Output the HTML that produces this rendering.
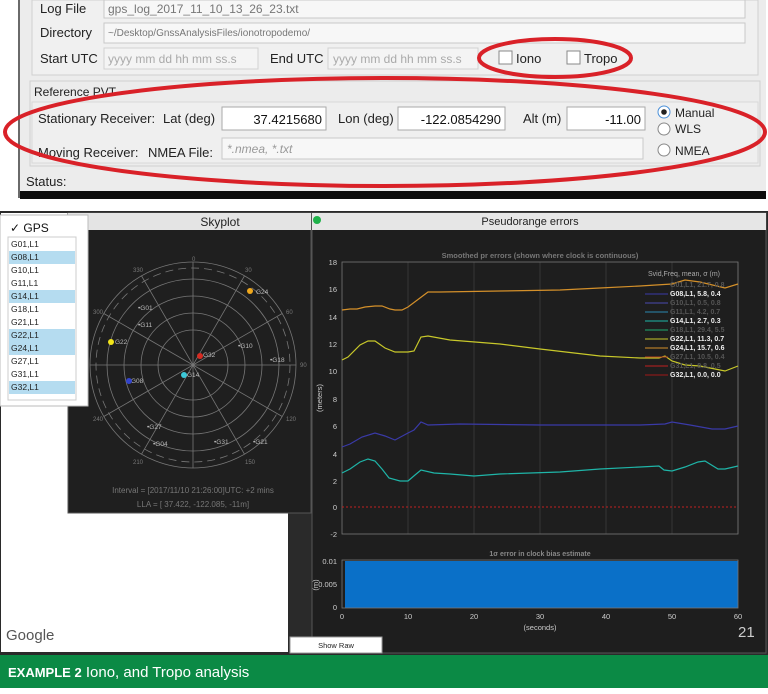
<!DOCTYPE html>
<html><head><meta charset="utf-8"><style>
html,body{margin:0;padding:0;background:#fff;width:768px;height:694px;overflow:hidden}
svg{display:block;font-family:"Liberation Sans",sans-serif}
</style></head><body>
<svg width="768" height="694" viewBox="0 0 768 694" xmlns="http://www.w3.org/2000/svg">
<!-- TOP PANEL -->
<rect x="0" y="0" width="768" height="210" fill="#fff"/>
<rect x="18" y="0" width="748" height="198" fill="#ececec"/>
<rect x="18" y="0" width="2" height="198" fill="#6a6a6a"/>
<rect x="20" y="191" width="746" height="8" fill="#0c0c0c"/>
<rect x="32" y="0" width="726" height="75" fill="#f0f0f0" stroke="#d0d0d0"/>
<g font-size="13" fill="#222">
<text x="40" y="13">Log File</text>
<text x="40" y="37">Directory</text>
<text x="40" y="63">Start UTC</text>
<text x="270" y="63">End UTC</text>
</g>
<rect x="104" y="0" width="641" height="18" fill="#f7f7f7" stroke="#c8c8c8"/>
<text x="108" y="13" font-size="12" fill="#777">gps_log_2017_11_10_13_26_23.txt</text>
<rect x="104" y="23" width="641" height="20" fill="#f7f7f7" stroke="#c8c8c8"/>
<text x="108" y="36" font-size="10" fill="#777">~/Desktop/GnssAnalysisFiles/ionotropodemo/</text>
<rect x="104" y="48" width="154" height="21" fill="#f4f4f4" stroke="#d2d2d2"/>
<text x="108" y="63" font-size="12" fill="#aaa">yyyy mm dd hh mm ss.s</text>
<rect x="328" y="48" width="150" height="21" fill="#f4f4f4" stroke="#d2d2d2"/>
<text x="333" y="63" font-size="12" fill="#aaa">yyyy mm dd hh mm ss.s</text>
<rect x="499" y="51" width="13" height="13" fill="#fff" stroke="#888"/>
<text x="516" y="63" font-size="13" fill="#222">Iono</text>
<rect x="567" y="51" width="13" height="13" fill="#fff" stroke="#888"/>
<text x="584" y="63" font-size="13" fill="#222">Tropo</text>

<rect x="30" y="81" width="730" height="85" fill="#ececec" stroke="#d0d0d0"/>
<text x="34" y="96" font-size="12" fill="#222">Reference PVT</text>
<rect x="32" y="102" width="726" height="61" fill="#efefef" stroke="#d8d8d8"/>
<g font-size="13" fill="#222">
<text x="38" y="123">Stationary Receiver:</text>
<text x="163" y="123">Lat (deg)</text>
<text x="338" y="123">Lon (deg)</text>
<text x="523" y="123">Alt (m)</text>
<text x="38" y="157">Moving Receiver:</text>
<text x="148" y="157">NMEA File:</text>
<text x="675" y="117" font-size="12">Manual</text>
<text x="675" y="133" font-size="12">WLS</text>
<text x="675" y="155" font-size="12">NMEA</text>
</g>
<rect x="222" y="107" width="104" height="23" fill="#fff" stroke="#aaa"/>
<text x="322" y="124" font-size="13" text-anchor="end" fill="#111">37.4215680</text>
<rect x="398" y="107" width="107" height="23" fill="#fff" stroke="#aaa"/>
<text x="501" y="124" font-size="13" text-anchor="end" fill="#111">-122.0854290</text>
<rect x="567" y="107" width="78" height="23" fill="#fff" stroke="#aaa"/>
<text x="641" y="124" font-size="13" text-anchor="end" fill="#111">-11.00</text>
<rect x="222" y="138" width="421" height="21" fill="#f7f7f7" stroke="#c8c8c8"/>
<text x="227" y="153" font-size="12" font-style="italic" fill="#999">*.nmea, *.txt</text>
<circle cx="664" cy="112" r="6" fill="#fff" stroke="#4a90d9"/><circle cx="664" cy="112" r="2.8" fill="#222"/>
<circle cx="664" cy="129" r="6" fill="#fff" stroke="#888"/>
<circle cx="664" cy="150" r="6" fill="#fff" stroke="#888"/>
<text x="26" y="186" font-size="13" fill="#222">Status:</text>
<!-- red ellipses -->
<ellipse cx="555" cy="58" rx="76" ry="19" fill="none" stroke="#d92128" stroke-width="4"/>
<ellipse cx="385" cy="132" rx="380" ry="54" fill="none" stroke="#d92128" stroke-width="4"/>

<!-- BOTTOM -->
<rect x="0" y="211" width="768" height="444" fill="#2a2a2a"/>
<rect x="1" y="213" width="287" height="439" fill="#fff"/>
<text x="6" y="640" font-size="15" fill="#555">Google</text>
<!-- skyplot window -->
<rect x="68" y="213" width="243" height="300" fill="#1f1f1f" stroke="#555"/>
<rect x="68" y="213" width="243" height="17" fill="#e4e4e4"/>
<text x="220" y="226" font-size="12" text-anchor="middle" fill="#222">Skyplot</text>
<g fill="none" stroke="#777" stroke-width="0.8">
<circle cx="193" cy="365" r="103"/><circle cx="193" cy="365" r="86"/><circle cx="193" cy="365" r="69"/><circle cx="193" cy="365" r="52"/><circle cx="193" cy="365" r="35"/>
<circle cx="193" cy="365" r="97" stroke-dasharray="8 5"/>
<line x1="193" y1="262" x2="193" y2="468"/><line x1="90" y1="365" x2="296" y2="365"/>
<line x1="141.5" y1="275.8" x2="244.5" y2="454.2"/><line x1="244.5" y1="275.8" x2="141.5" y2="454.2"/>
<line x1="103.8" y1="313.5" x2="282.2" y2="416.5"/><line x1="282.2" y1="313.5" x2="103.8" y2="416.5"/>
</g>
<g font-size="6" fill="#777">
<text x="192" y="261">0</text><text x="245" y="272">30</text><text x="286" y="314">60</text><text x="300" y="367">90</text>
<text x="286" y="421">120</text><text x="245" y="464">150</text><text x="133" y="464">210</text><text x="93" y="421">240</text><text x="93" y="314">300</text><text x="133" y="272">330</text>
</g>
<g font-size="6.5" fill="#bbb">
<text x="138" y="310">•G01</text><text x="138" y="327">•G11</text><text x="238" y="348">•G10</text><text x="270" y="362">•G18</text>
<text x="147" y="429">•G27</text><text x="153" y="446">•G04</text><text x="214" y="444">•G31</text><text x="253" y="444">•G21</text>
<text x="256" y="294">G24</text><text x="115" y="344">G22</text><text x="203" y="357">G32</text><text x="131" y="383">G08</text><text x="187" y="377">G14</text>
</g>
<circle cx="250" cy="291" r="3" fill="#f0a81c"/><circle cx="111" cy="342" r="3" fill="#f2e51a"/>
<circle cx="200" cy="356" r="3" fill="#d62b22"/><circle cx="129" cy="381" r="3" fill="#3344cc"/><circle cx="184" cy="375" r="3" fill="#3cc8d8"/>
<text x="193" y="493" font-size="8" text-anchor="middle" fill="#777">Interval = [2017/11/10  21:26:00]UTC: +2 mins</text>
<text x="193" y="507" font-size="8" text-anchor="middle" fill="#777">LLA = [ 37.422, -122.085, -11m]</text>
<!-- GPS list -->
<rect x="0" y="215" width="88" height="191" fill="#fff" stroke="#bbb"/>
<text x="10" y="232" font-size="12" fill="#111">✓ GPS</text>
<rect x="8" y="237" width="68" height="163" fill="#fff" stroke="#ccc"/>
<g>
<rect x="9" y="251" width="66" height="13" fill="#b5dcf0"/>
<rect x="9" y="290" width="66" height="13" fill="#b5dcf0"/>
<rect x="9" y="329" width="66" height="26" fill="#b5dcf0"/>
<rect x="9" y="381" width="66" height="13" fill="#b5dcf0"/>
</g>
<g font-size="8.5" fill="#222">
<text x="11" y="247">G01,L1</text><text x="11" y="260">G08,L1</text><text x="11" y="273">G10,L1</text><text x="11" y="286">G11,L1</text>
<text x="11" y="299">G14,L1</text><text x="11" y="312">G18,L1</text><text x="11" y="325">G21,L1</text><text x="11" y="338">G22,L1</text>
<text x="11" y="351">G24,L1</text><text x="11" y="364">G27,L1</text><text x="11" y="377">G31,L1</text><text x="11" y="390">G32,L1</text>
</g>
<!-- Pseudorange window -->
<rect x="312" y="213" width="454" height="440" fill="#1e1e1e" stroke="#555"/>
<rect x="312" y="213" width="454" height="17" fill="#e6e6e6"/>
<circle cx="317" cy="220" r="4" fill="#1fb24a"/>
<text x="530" y="225" font-size="11" text-anchor="middle" fill="#222">Pseudorange errors</text>
<text x="540" y="258" font-size="7.5" text-anchor="middle" fill="#777" font-weight="bold">Smoothed pr errors (shown where clock is continuous)</text>
<g stroke="#3c3c3c" stroke-width="0.8">
<line x1="408" y1="262" x2="408" y2="534"/><line x1="474" y1="262" x2="474" y2="534"/><line x1="540" y1="262" x2="540" y2="534"/><line x1="606" y1="262" x2="606" y2="534"/><line x1="672" y1="262" x2="672" y2="534"/><line x1="738" y1="262" x2="738" y2="534"/>
</g>
<rect x="342" y="262" width="396" height="272" fill="none" stroke="#777" stroke-width="0.8"/>
<g font-size="7.5" fill="#ccc" text-anchor="end">
<text x="337" y="265">18</text><text x="337" y="292">16</text><text x="337" y="320">14</text><text x="337" y="347">12</text><text x="337" y="374">10</text>
<text x="337" y="402">8</text><text x="337" y="429">6</text><text x="337" y="457">4</text><text x="337" y="484">2</text><text x="337" y="510">0</text><text x="337" y="537">-2</text>
</g>
<text x="322" y="398" font-size="7.5" fill="#ccc" transform="rotate(-90 322 398)" text-anchor="middle">(meters)</text>
<line x1="342" y1="507" x2="738" y2="507" stroke="#c02020" stroke-dasharray="2 2"/>
<g fill="none" stroke-width="1.2">
<polyline stroke="#d4902a" points="342,310 350,309 357,309 365,307 375,306 382,306 390,309 395,310 402,310 408,307 428,292 440,292 500,291 560,290 600,288 640,286 672,284 685,280 700,282 725,288 738,284"/>
<polyline stroke="#c8c82a" points="342,360 348,357 360,345 368,341 375,341 385,348 395,352 408,352 414,351 421,337 428,336 450,340 500,344 540,349 600,356 640,358 659,358 665,356 672,361 685,365 700,366 725,371 738,366"/>
<polyline stroke="#3a3aa8" points="342,447 350,444 362,437 375,433 385,436 395,440 408,433 414,430 421,422 428,425 460,424 540,425 600,425 640,425 665,424 672,422 690,425 712,429 725,429 738,426"/>
<polyline stroke="#1fb5a8" points="342,473 350,469 360,462 368,459 375,461 382,469 389,478 400,481 408,481 415,475 421,470 434,473 450,474 474,476 500,474 560,472 600,469 640,467 659,466 664,470 672,471 685,467 698,462 705,461 718,469 725,469 738,466"/>
</g>
<g font-size="7" font-weight="bold">
<text x="648" y="276" fill="#aaa" font-weight="normal">Svid,Freq, mean, σ (m)</text>
<text x="670" y="287" fill="#555">G01,L1, 21.7, 0.8</text>
<text x="670" y="296" fill="#eee">G08,L1,  5.8,  0.4</text>
<text x="670" y="305" fill="#555">G10,L1,  0.5,  0.8</text>
<text x="670" y="314" fill="#555">G11,L1,  4.2,  0.7</text>
<text x="670" y="323" fill="#eee">G14,L1,  2.7,  0.3</text>
<text x="670" y="332" fill="#555">G18,L1, 29.4,  5.5</text>
<text x="670" y="341" fill="#eee">G22,L1, 11.3,  0.7</text>
<text x="670" y="350" fill="#eee">G24,L1, 15.7,  0.6</text>
<text x="670" y="359" fill="#555">G27,L1, 10.5,  0.4</text>
<text x="670" y="368" fill="#555">G31,L1,  8.8,  0.5</text>
<text x="670" y="377" fill="#eee">G32,L1,  0.0,  0.0</text>
</g>
<g stroke-width="1">
<line x1="645" y1="294" x2="668" y2="294" stroke="#3a3aa8"/><line x1="645" y1="303" x2="668" y2="303" stroke="#4a4ab0"/>
<line x1="645" y1="312" x2="668" y2="312" stroke="#2a88b0"/><line x1="645" y1="321" x2="668" y2="321" stroke="#1fb5a8"/>
<line x1="645" y1="330" x2="668" y2="330" stroke="#1faa70"/><line x1="645" y1="339" x2="668" y2="339" stroke="#c8c82a"/>
<line x1="645" y1="348" x2="668" y2="348" stroke="#d4902a"/><line x1="645" y1="357" x2="668" y2="357" stroke="#b04020"/>
<line x1="645" y1="366" x2="668" y2="366" stroke="#c02020"/><line x1="645" y1="375" x2="668" y2="375" stroke="#a01818"/>
</g>
<text x="540" y="556" font-size="7" text-anchor="middle" fill="#888" font-weight="bold">1σ error in clock bias estimate</text>
<rect x="345" y="561" width="393" height="47" fill="#0a70c8"/>
<rect x="342" y="560" width="396" height="48" fill="none" stroke="#777" stroke-width="0.8"/>
<g font-size="7.5" fill="#ccc" text-anchor="end">
<text x="337" y="564">0.01</text><text x="337" y="587">0.005</text><text x="337" y="610">0</text>
</g>
<text x="318" y="585" font-size="7.5" fill="#ccc" transform="rotate(-90 318 585)" text-anchor="middle">(m)</text>
<g font-size="7.5" fill="#ccc" text-anchor="middle">
<text x="342" y="619">0</text><text x="408" y="619">10</text><text x="474" y="619">20</text><text x="540" y="619">30</text><text x="606" y="619">40</text><text x="672" y="619">50</text><text x="738" y="619">60</text>
<text x="540" y="630">(seconds)</text>
</g>
<text x="738" y="637" font-size="15" fill="#ccc">21</text>
<rect x="290" y="637" width="92" height="16" fill="#fff" stroke="#999"/>
<text x="336" y="648" font-size="7.5" text-anchor="middle" fill="#222">Show Raw</text>
<!-- banner -->
<rect x="0" y="655" width="768" height="33" fill="#0b8a45"/>
<text x="8" y="677" font-size="15" fill="#fff"><tspan font-weight="bold" font-size="13">EXAMPLE 2</tspan> Iono, and Tropo analysis</text>
</svg>
</body></html>
